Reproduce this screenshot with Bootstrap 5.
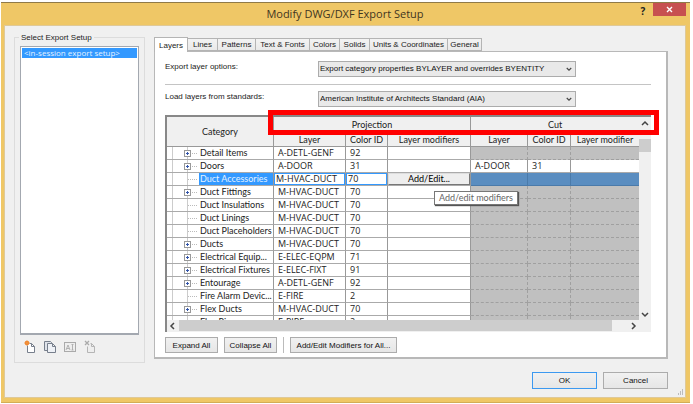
<!DOCTYPE html>
<html lang="en">
<head>
<meta charset="utf-8">
<meta name="viewport" content="width=device-width, initial-scale=1">
<title>Modify DWG/DXF Export Setup</title>
<link href="https://cdn.jsdelivr.net/npm/bootstrap@5.3.0/dist/css/bootstrap.min.css" rel="stylesheet">
<style>
:root{--ui:"Liberation Sans",Arial,sans-serif;--grid:Lato,"Open Sans",sans-serif;--title:"Open Sans","Noto Sans",sans-serif}
body{font:8px/12px var(--ui);color:#222;background:#fff;padding:2px 3px 1px 1px}
button,select{font-family:inherit}
.dlg{background:#efc766;border-top:1px solid #8f7a48;border-bottom:1px solid #d3ad55;padding:0 4px 4px 3px}
.titlebar{height:22px;position:relative}
.titlebar h1{font-family:var(--title);font-size:11px;line-height:22px;color:#3f351f}
.winbtns{position:absolute;right:0;top:0}
.winbtns button{border:0;background:none;padding:0;height:13px;line-height:13px;color:#222}
.winbtns .help{width:20px;font-family:var(--title);font-size:10px;font-weight:700;height:17px;line-height:17px}
.winbtns .closer{width:33px;background:#c75050}
.client{background:#f0f0f0;border:1px solid #dfc998;padding:11px 17px 8px 9px;position:relative;min-height:0}
.setup{width:131px;border:1px solid #dcdcdc;padding:8px 5px;position:relative;margin:0 9px 26px 0}
.setup h2{font-size:8px;line-height:10px;position:absolute;top:-5px;left:4px;background:#f0f0f0;padding:0 2px}
.listbox{background:#fff;border:1px solid #a3a8b0;border-width:1px 1px 2px;padding:1px}
.listbox button{border:0;background:#3399ff;color:#e4f2ff;font-family:var(--title);font-size:8px;text-align:left;padding:0 2px;line-height:10px;width:100%}
.tools{gap:7px;padding:5px 0 0 4px}
.tools button{border:0;background:none;padding:0;width:13px;height:14px;line-height:0}
.main-col{min-width:0}
.tabs button{border:1px solid #b4b4b4;border-left-width:0;background:linear-gradient(#f3f3f3,#e9e9e9);height:13px;line-height:11px;padding:0;color:#222}
.tabs .on{background:#fff;border-width:1px 1px 0;height:15px;line-height:13px;margin-bottom:-1px;position:relative}
.w30{width:30px}.w34{width:34px}.w38{width:38px}.w54{width:54px}.w78{width:78px}
.pane{background:#fff;border:1px solid #b8b8b8;padding:9px 15px 4px 10px;border-width:1px 2px 2px 1px;min-height:0}
.opt label{width:153px}
.opt select{width:258px;height:16px;line-height:14px;font-size:8px;border:1px solid #acacac;border-radius:0;padding:0 14px 0 1px;color:#111;
 background:#e9e9e9 url("data:image/svg+xml,%3Csvg xmlns='http://www.w3.org/2000/svg' viewBox='0 0 8 6'%3E%3Cpath d='M1 1l3 3 3-3' fill='none' stroke='%23444' stroke-width='1.5'/%3E%3C/svg%3E") no-repeat right 3px center/6px 5px}
.rule{height:1px;background:#c4c4c4;margin:7px 0 6px}
.gridbox{border:1px solid #888;border-width:2px 0 0 2px;margin-top:8px;min-height:0;position:relative;background:#f0f0f0;font-family:var(--grid);font-size:9px}
.body-row{min-height:0}
.view{min-height:0;overflow:hidden}
.tbl{table-layout:fixed;width:100%;border-collapse:separate;border-spacing:0;background:#fff}
.tbl .c107{width:107px}.tbl .c72{width:72px}.tbl .c42{width:42px}.tbl .c83{width:83px}.tbl .c57{width:57px}.tbl .c43{width:43px}
.tbl th{background:#f0f0f0;font-weight:400;text-align:center;border-right:1px solid #999;border-bottom:1px solid #999;padding:0;height:14px;line-height:13px;white-space:nowrap;overflow:hidden}
.tbl .top th{height:16px;line-height:15px}
.tbl td{height:13px;line-height:12px;padding:0 0 0 4px;border-right:1px solid #999;border-bottom:1px solid #aaa;white-space:nowrap;overflow:hidden}
.tbl .top th:last-child,.tbl tr:nth-child(2) th:last-child,.tbl td:last-child{border-right:0}
.tbl td.code{font-family:var(--title)}
.tbl td.void{background:#c0c0c0;border-color:#a0a0a0;border-style:dashed}
.tbl td.cat{padding:0;background:linear-gradient(90deg,transparent 5px,#ccc 5px,#ccc 6px,transparent 6px,transparent 20px,#ccc 20px,#ccc 21px,transparent 21px)}
.cat span{display:block;padding-left:1px;margin-left:32px}
.node{float:left;width:32px;height:12px}
.picked span{background:#3399ff;color:#e4f2ff}
.tbl .picked td.void{background:#5a8dc0;border-color:#4a7aaa;border-style:solid}
.tbl .picked td.edit{box-shadow:inset 0 0 0 1px #3399ff;padding-left:2px}
.tbl .picked td.act{padding:0}
.act button{width:100%;height:12px;line-height:10px;padding:0;border:1px solid #777;border-top-color:#ddd;border-left-color:#ddd;background:#eee;display:block}
.vbar{width:12px;padding-top:2px}
.vbar i,.hbar i{display:block;background:#cdcdcd}
.vbar i{height:13px}
.hbar{height:12px}
.hbar i{height:11px}
.hbar .to-right{margin:0 12px 0 15px}
.bar-arrow{width:12px;height:12px;display:block}
.mark-frame{position:absolute;left:101px;right:-8px;top:-7px;height:25px;border:5px solid #f00}
.tip{position:absolute;left:267px;top:74px;padding:0 4px;height:14px;line-height:12px;background:#fff;border:1px solid #777;box-shadow:1px 1px 1px #555;color:#666}
.push{border:1px solid #acacac;background:linear-gradient(#f1f1f1,#e6e6e6);height:16px;line-height:13px;padding:0;color:#111}
.cmds{column-gap:6px;padding-top:5px}
.w53{width:53px}.w107{width:107px}.w65{width:65px;height:17px}
.sep{width:1px;height:16px;background:#bbb}
.primary{border-color:#3c99f0}
.foot{padding-top:13px;column-gap:6px}
.grip{position:absolute;right:1px;bottom:1px;width:7px;height:7px}
</style>
<script src="https://cdn.jsdelivr.net/npm/bootstrap@5.3.0/dist/js/bootstrap.bundle.min.js"></script>
</head>
<body class="vh-100">
<main class="dlg h-100 d-flex flex-column">
 <header class="titlebar flex-shrink-0">
  <h1 class="text-center m-0 fw-normal">Modify DWG/DXF Export Setup</h1>
  <div class="winbtns d-flex">
   <button class="help" type="button">?</button>
   <button class="closer" type="button" aria-label="Close"><svg width="7" height="7" viewBox="0 0 7 7" class="d-block mx-auto"><path d="M1 1l5 5M6 1L1 6" stroke="#fff" stroke-width="1.4"/></svg></button>
  </div>
 </header>
 <div class="client flex-fill d-flex flex-row">
  <section class="setup flex-shrink-0 d-flex flex-column">
   <h2 class="m-0 fw-normal">Select Export Setup</h2>
   <div class="listbox flex-fill"><button type="button" class="d-block">&lt;in-session export setup&gt;</button></div>
   <div class="tools d-flex">
    <button type="button" aria-label="New setup"><svg width="13" height="14" viewBox="0 0 13 14"><path d="M3.500 5.500v7h7v-6l-3-3h-2M7.500 3.500v3h3" fill="#fff" stroke="#777f8c"/><circle cx="3" cy="3" r="2.300" fill="#ee7d22"/><path d="M3 0v6M0 3h6" stroke="#f3a050" stroke-width=".7"/></svg></button>
    <button type="button" aria-label="Duplicate setup"><svg width="13" height="14" viewBox="0 0 13 14"><path d="M.5 1.500h6l1 1v8h-7z" fill="#dfe3ea" stroke="#777f8c"/><path d="M3.500 3.500h5l3 3v6h-8zM8.500 3.500v3h3" fill="#eef1f6" stroke="#777f8c"/></svg></button>
    <button type="button" aria-label="Rename setup"><svg width="13" height="14" viewBox="0 0 13 14"><rect x=".5" y="2.500" width="11" height="9" fill="#eee" stroke="#aaa"/><path d="M2 10l2-5 2 5M2.800 8.500h2.400M8.500 5v5M7.500 4.500h2M7.500 10h2" fill="none" stroke="#aaa" stroke-width=".9"/></svg></button>
    <button type="button" aria-label="Delete setup"><svg width="13" height="14" viewBox="0 0 13 14"><path d="M3.500 6.500v6h7v-6l-3-3h-1M7.500 3.500v3h3" fill="#eee" stroke="#b5b5b5"/><path d="M1 1l4 4M5 1L1 5" stroke="#aaa" stroke-width="1.300"/></svg></button>
   </div>
  </section>
  <div class="main-col d-flex flex-column flex-fill">
   <nav class="tabs d-flex align-items-end">
    <button type="button" class="on w34">Layers</button><button type="button" class="w30">Lines</button><button type="button" class="w38">Patterns</button><button type="button" class="w54">Text &amp; Fonts</button><button type="button" class="w30">Colors</button><button type="button" class="w30">Solids</button><button type="button" class="w78">Units &amp; Coordinates</button><button type="button" class="w34">General</button>
   </nav>
   <section class="pane flex-fill d-flex flex-column">
    <div class="opt d-flex"><label for="lay">Export layer options:</label><select id="lay" class="form-select"><option>Export category properties BYLAYER and overrides BYENTITY</option></select></div>
    <div class="rule flex-shrink-0"></div>
    <div class="opt d-flex"><label for="std">Load layers from standards:</label><select id="std" class="form-select"><option>American Institute of Architects Standard (AIA)</option></select></div>
    <div class="gridbox flex-fill d-flex flex-column">
     <div class="body-row d-flex flex-fill">
      <div class="view flex-fill">
       <table class="tbl">
        <colgroup><col class="c107"><col class="c72"><col class="c42"><col class="c83"><col class="c57"><col class="c43"><col></colgroup>
        <thead>
         <tr class="top"><th rowspan="2">Category</th><th colspan="3">Projection</th><th colspan="3">Cut</th></tr>
         <tr><th>Layer</th><th>Color ID</th><th>Layer modifiers</th><th>Layer</th><th>Color ID</th><th>Layer modifier</th></tr>
        </thead>
        <tbody id="rows"></tbody>
       </table>
      </div>
      <div class="vbar d-flex flex-column flex-shrink-0">
       <svg class="bar-arrow" viewBox="0 0 12 12"><path d="M3 6l3-3 3 3" fill="none" stroke="#444" stroke-width="1.500"/></svg>
       <i class="mt-2"></i>
       <svg class="bar-arrow mt-auto" viewBox="0 0 12 12"><path d="M3 5l3 3 3-3" fill="none" stroke="#444" stroke-width="1.500"/></svg>
      </div>
     </div>
     <div class="hbar d-flex flex-shrink-0">
      <svg class="bar-arrow" viewBox="0 0 12 12"><path d="M7 3L4 6l3 3" fill="none" stroke="#444" stroke-width="1.500"/></svg>
      <i class="flex-fill"></i>
      <svg class="bar-arrow to-right" viewBox="0 0 12 12"><path d="M5 3l3 3-3 3" fill="none" stroke="#444" stroke-width="1.500"/></svg>
     </div>
     <div class="mark-frame"></div>
     <div class="tip" role="tooltip">Add/edit modifiers</div>
    </div>
    <div class="cmds d-flex">
     <button type="button" class="push w53">Expand All</button><button type="button" class="push w53">Collapse All</button><span class="sep"></span><button type="button" class="push w107">Add/Edit Modifiers for All...</button>
    </div>
   </section>
   <div class="foot d-flex justify-content-end">
    <button type="button" class="push w65 primary">OK</button><button type="button" class="push w65">Cancel</button>
   </div>
  </div>
  <svg class="grip" viewBox="0 0 7 7"><path d="M5 1h1M3 3h1M5 3h1M1 5h1M3 5h1M5 5h1" stroke="#aaa" stroke-width="1.300"/></svg>
 </div>
</main>
<script>
const data=[["+","Detail Items","A-DETL-GENF","92"],["+","Doors","A-DOOR","31","A-DOOR","31"],["","Duct Accessories","M-HVAC-DUCT","70"],["+","Duct Fittings","M-HVAC-DUCT","70"],["","Duct Insulations","M-HVAC-DUCT","70"],["","Duct Linings","M-HVAC-DUCT","70"],["","Duct Placeholders","M-HVAC-DUCT","70"],["+","Ducts","M-HVAC-DUCT","70"],["+","Electrical Equip...","E-ELEC-EQPM","71"],["+","Electrical Fixtures","E-ELEC-FIXT","91"],["+","Entourage","A-DETL-GENF","92"],["","Fire Alarm Devic...","E-FIRE","2"],["+","Flex Ducts","M-HVAC-DUCT","70"],["","Flex Pipes","E-PIPE","2"]];
document.getElementById("rows").innerHTML=data.map((r,i)=>{
 const sel=i===2,e=sel?" edit":"",v=r[4]?"":" void";
 const box=r[0]?'<rect x="17.500" y="3.500" width="6" height="6" fill="#fff" stroke="#999"/><path d="M19 6.500h3M20.500 5v3" stroke="#3355aa"/>':'';
 return `<tr class="${sel?"picked":""}"><td class="cat"><svg class="node" viewBox="0 0 32 12"><path d="M21 6.500h10" stroke="#bbb" stroke-dasharray="1 1"/>${box}</svg><span>${r[1]}</span></td><td class="code${e}">${r[2]}</td><td class="code${e}">${r[3]}</td><td class="${sel?"edit act":""}">${sel?'<button type="button">Add/Edit...</button>':""}</td><td class="code${v}">${r[4]||""}</td><td class="code${v}">${r[5]||""}</td><td class="code${r[4]?"":" void"}"></td></tr>`}).join("");
</script>
</body>
</html>
